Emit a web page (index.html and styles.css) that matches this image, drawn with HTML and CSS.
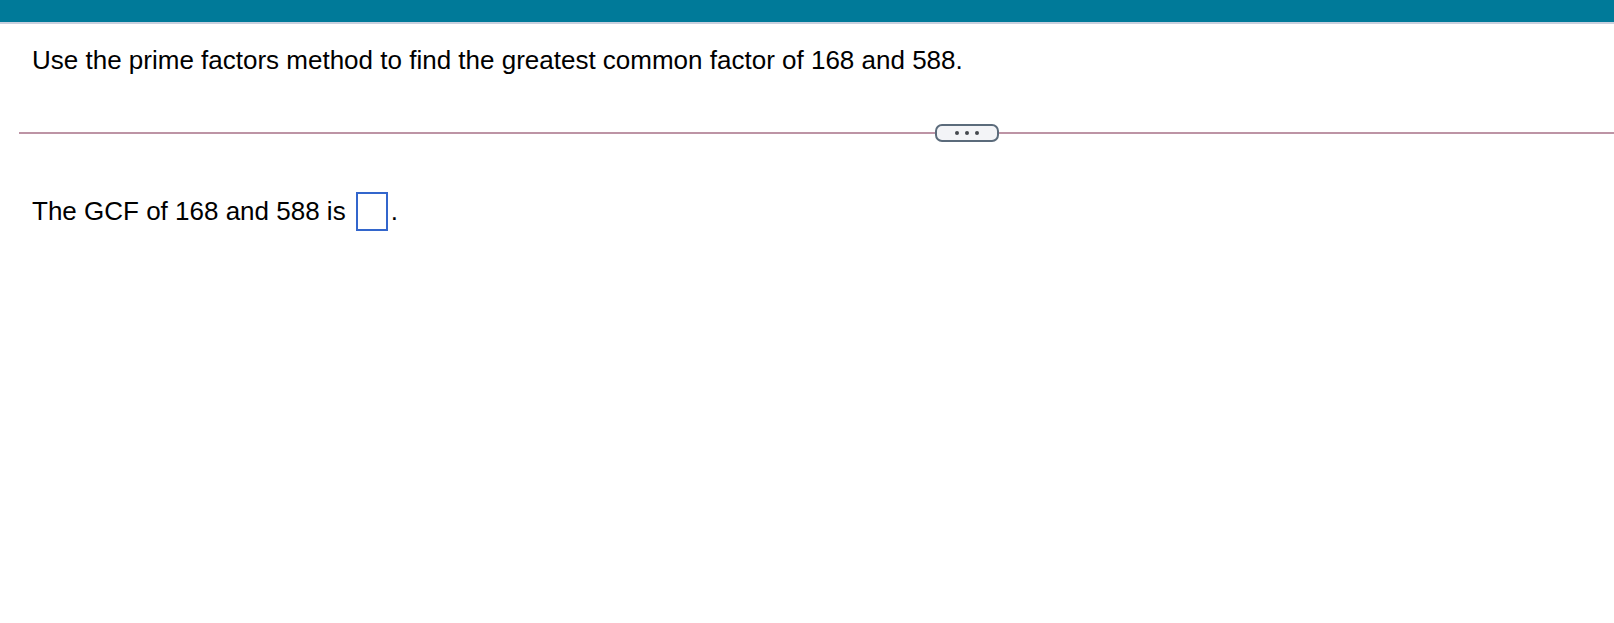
FILE: index.html
```html
<!DOCTYPE html>
<html>
<head>
<meta charset="utf-8">
<link rel="stylesheet" href="styles.css">
</head>
<body>
<div class="topbar"></div>
<div class="question">Use the prime factors method to find the greatest common factor of 168 and 588.</div>
<div class="divider">
  <div class="rule rule-left"></div>
  <button class="more"><span class="dot"></span><span class="dot"></span><span class="dot"></span></button>
  <div class="rule"></div>
</div>
<div class="answer"><span>The GCF of 168 and 588 is</span><span class="box"></span><span>.</span></div>
</body>
</html>
```
FILE: styles.css
```css
html, body {
  margin: 0;
  padding: 0;
  background: #fff;
  font-family: "Liberation Sans", Arial, sans-serif;
  color: #000;
}
.topbar {
  height: 22px;
  background: #007a99;
  border-bottom: 2px solid #c9d0de;
}
.question {
  font-size: 26px;
  line-height: 30px;
  padding: 21px 0 0 32px;
}
.divider {
  display: flex;
  align-items: center;
  margin: 49px 0 0 19px;
  height: 18px;
}
.rule {
  flex: 1;
  height: 2px;
  background: #bd94a5;
}
.rule-left {
  flex: 0 0 916px;
}
.more {
  width: 64px;
  height: 18px;
  box-sizing: border-box;
  border: 2px solid #5b6b7b;
  border-radius: 7px;
  background: #f3f4f7;
  display: flex;
  align-items: center;
  justify-content: center;
  gap: 6px;
  padding: 0;
}
.dot {
  width: 4px;
  height: 4px;
  border-radius: 50%;
  background: #45494e;
}
.answer {
  font-size: 26px;
  line-height: 40px;
  padding: 49px 0 0 32px;
  display: flex;
  align-items: center;
}
.box {
  display: block;
  width: 32px;
  height: 39px;
  box-sizing: border-box;
  border: 2px solid #3366cc;
  margin: 0 3px 0 10px;
}
```
